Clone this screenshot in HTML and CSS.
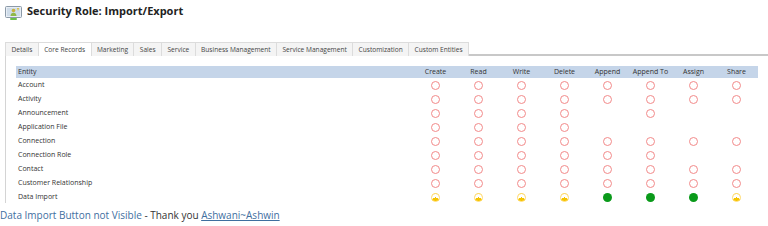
FILE: index.html
```html
<!DOCTYPE html>
<html>
<head>
<meta charset="utf-8">
<link rel="stylesheet" href="styles.css">
</head>
<body>
<div class="titlebar">
  <svg class="role-icon" width="20" height="18" viewBox="0 0 20 18">
    <rect x="1.5" y="2.5" width="16" height="11" rx="1" fill="#e8eef5" stroke="#8c9aa8"/>
    <rect x="3" y="4" width="13" height="8" fill="#cfdce9"/>
    <circle cx="9.5" cy="6.5" r="1.8" fill="#c9b23a"/>
    <path d="M6.5 12 Q6.8 8.8 9.5 8.8 Q12.2 8.8 12.5 12 Z" fill="#8fb848"/>
    <path d="M13 4 l2 0 l-1 3 z" fill="#e0c030"/>
    <rect x="6" y="14" width="7" height="2" rx="1" fill="#6cc04a"/>
  </svg>
  <h1 class="title">Security Role: Import/Export</h1>
</div>

<div class="tabs">
  <div class="tab">Details</div>
  <div class="tab active">Core Records</div>
  <div class="tab">Marketing</div>
  <div class="tab">Sales</div>
  <div class="tab">Service</div>
  <div class="tab">Business Management</div>
  <div class="tab">Service Management</div>
  <div class="tab">Customization</div>
  <div class="tab last">Custom Entities</div>
  <div class="tab-fill"></div>
</div>

<div class="panel">
  <table class="grid">
    <thead>
      <tr>
        <th class="entity">Entity</th>
        <th>Create</th><th>Read</th><th>Write</th><th>Delete</th>
        <th>Append</th><th>Append To</th><th>Assign</th><th>Share</th>
      </tr>
    </thead>
    <tbody>
      <tr><td class="entity">Account</td>
        <td><i class="c red"></i></td><td><i class="c red"></i></td><td><i class="c red"></i></td><td><i class="c red"></i></td>
        <td><i class="c red"></i></td><td><i class="c red"></i></td><td><i class="c red"></i></td><td><i class="c red"></i></td></tr>
      <tr><td class="entity">Activity</td>
        <td><i class="c red"></i></td><td><i class="c red"></i></td><td><i class="c red"></i></td><td><i class="c red"></i></td>
        <td><i class="c red"></i></td><td><i class="c red"></i></td><td><i class="c red"></i></td><td><i class="c red"></i></td></tr>
      <tr><td class="entity">Announcement</td>
        <td><i class="c red"></i></td><td><i class="c red"></i></td><td><i class="c red"></i></td><td><i class="c red"></i></td>
        <td></td><td><i class="c red"></i></td><td></td><td></td></tr>
      <tr><td class="entity">Application File</td>
        <td><i class="c red"></i></td><td><i class="c red"></i></td><td><i class="c red"></i></td><td><i class="c red"></i></td>
        <td></td><td></td><td></td><td></td></tr>
      <tr><td class="entity">Connection</td>
        <td><i class="c red"></i></td><td><i class="c red"></i></td><td><i class="c red"></i></td><td><i class="c red"></i></td>
        <td><i class="c red"></i></td><td><i class="c red"></i></td><td><i class="c red"></i></td><td><i class="c red"></i></td></tr>
      <tr><td class="entity">Connection Role</td>
        <td><i class="c red"></i></td><td><i class="c red"></i></td><td><i class="c red"></i></td><td><i class="c red"></i></td>
        <td><i class="c red"></i></td><td><i class="c red"></i></td><td></td><td></td></tr>
      <tr><td class="entity">Contact</td>
        <td><i class="c red"></i></td><td><i class="c red"></i></td><td><i class="c red"></i></td><td><i class="c red"></i></td>
        <td><i class="c red"></i></td><td><i class="c red"></i></td><td><i class="c red"></i></td><td><i class="c red"></i></td></tr>
      <tr><td class="entity">Customer Relationship</td>
        <td><i class="c red"></i></td><td><i class="c red"></i></td><td><i class="c red"></i></td><td><i class="c red"></i></td>
        <td><i class="c red"></i></td><td><i class="c red"></i></td><td><i class="c red"></i></td><td><i class="c red"></i></td></tr>
      <tr><td class="entity">Data Import</td>
        <td><i class="c yellow"></i></td><td><i class="c yellow"></i></td><td><i class="c yellow"></i></td><td><i class="c yellow"></i></td>
        <td><i class="c green"></i></td><td><i class="c green"></i></td><td><i class="c green"></i></td><td><i class="c yellow"></i></td></tr>
    </tbody>
  </table>
</div>

<p class="caption"><span class="cap-blue">Data Import Button not Visible</span> - Thank you <a class="cap-link" href="#">Ashwani~Ashwin</a></p>
</body>
</html>
```

FILE: styles.css
```css
html, body {
  margin: 0;
  padding: 0;
  background: #ffffff;
}
body {
  width: 768px;
  height: 226px;
  overflow: hidden;
  font-family: "Open Sans", "DejaVu Sans", sans-serif;
  color: #333333;
}
.titlebar {
  display: flex;
  align-items: center;
  height: 22px;
  padding: 2px 0 0 4px;
  gap: 3px;
}
.role-icon {
  display: block;
  flex: none;
}
.title {
  margin: 0;
  font-family: "Open Sans", "DejaVu Sans", sans-serif;
  font-size: 11px;
  font-weight: 700;
  color: #222222;
  line-height: 14px;
  margin-top: -5px;
}
.tabs {
  display: flex;
  margin-top: 18px;
  padding-left: 5px;
  height: 14px;
  align-items: stretch;
}
.tab {
  box-sizing: border-box;
  border: 1px solid #dcdcdc;
  border-right: none;
  border-bottom: none;
  background: #f4f4f4;
  font-size: 6.6px;
  line-height: 13px;
  padding: 0 5.4px;
  color: #444444;
  white-space: nowrap;
}
.tab.last {
  border-right: 1px solid #dcdcdc;
}
.tab.active {
  background: #ffffff;
}
.tab-fill {
  flex: 1;
  border-bottom: 2px solid #c8c8c8;
}
.panel {
  border-left: 1px solid #d4d4d4;
  margin-left: 5px;
  padding: 10px 0 2px 10px;
  height: 135px;
}
.grid {
  border-collapse: collapse;
  width: 742px;
  table-layout: fixed;
  font-size: 7px;
  color: #333333;
}
.grid th {
  background: #c5d5e9;
  font-weight: 400;
  height: 12px;
  padding: 0;
  line-height: 12px;
  text-align: center;
  width: 43px;
}
.grid th.entity {
  width: auto;
  text-align: left;
  padding-left: 2px;
}
.grid td {
  height: 14px;
  padding: 0;
  text-align: center;
  line-height: 14px;
}
.grid td.entity {
  text-align: left;
  padding-left: 2px;
}
.c {
  display: inline-block;
  box-sizing: border-box;
  width: 9px;
  height: 9px;
  border-radius: 50%;
  vertical-align: middle;
}
.c.red {
  border: 1.5px solid #f28a8a;
}
.c.yellow {
  border: 1.5px solid #ffd966;
  background: radial-gradient(circle at 50% 100%, #f5c400 0, #f5c400 45%, #ffffff 46%);
}
.c.green {
  background: #0a9a1a;
}
.caption {
  margin: 5px 0 0 0;
  font-size: 10px;
  line-height: 14px;
  color: #333333;
}
.cap-blue {
  color: #3f6f9f;
}
.cap-link {
  color: #3f6f9f;
  text-decoration: underline;
}
```
